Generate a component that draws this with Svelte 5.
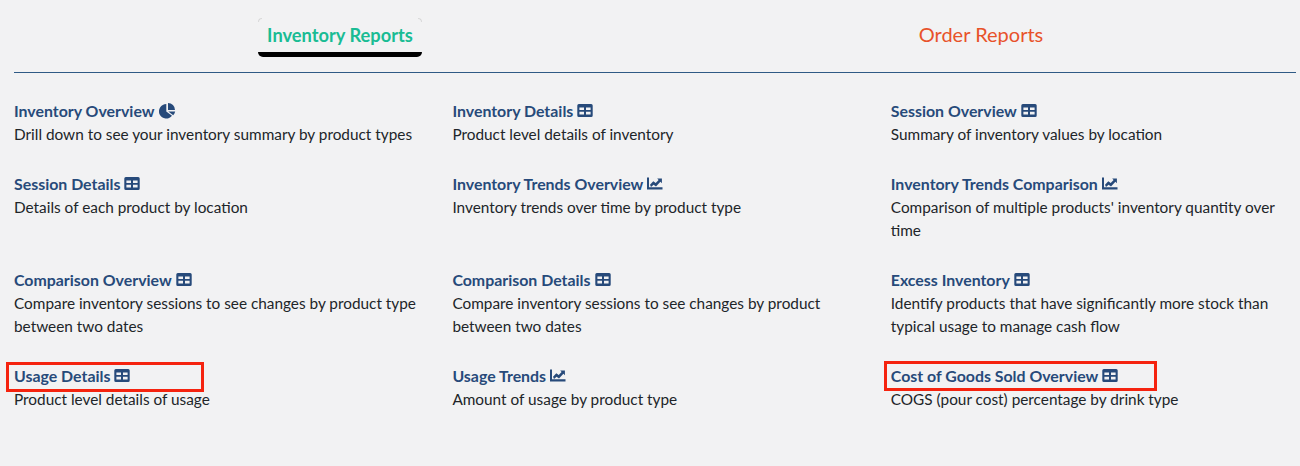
<script>
	const reports = [
		{ title: 'Inventory Overview', icon: 'pie', text: 'Drill down to see your inventory summary by product types' },
		{ title: 'Inventory Details', icon: 'table', text: 'Product level details of inventory' },
		{ title: 'Session Overview', icon: 'table', text: 'Summary of inventory values by location' },
		{ title: 'Session Details', icon: 'table', text: 'Details of each product by location' },
		{ title: 'Inventory Trends Overview', icon: 'line', text: 'Inventory trends over time by product type' },
		{ title: 'Inventory Trends Comparison', icon: 'line', text: "Comparison of multiple products' inventory quantity over time" },
		{ title: 'Comparison Overview', icon: 'table', text: 'Compare inventory sessions to see changes by product type between two dates' },
		{ title: 'Comparison Details', icon: 'table', text: 'Compare inventory sessions to see changes by product between two dates' },
		{ title: 'Excess Inventory', icon: 'table', text: 'Identify products that have significantly more stock than typical usage to manage cash flow' },
		{ title: 'Usage Details', icon: 'table', text: 'Product level details of usage' },
		{ title: 'Usage Trends', icon: 'line', text: 'Amount of usage by product type' },
		{ title: 'Cost of Goods Sold Overview', icon: 'table', text: 'COGS (pour cost) percentage by drink type' }
	];
</script>

<div class="page">
	<div class="tabs">
		<div class="tab-cell"><button class="tab active">Inventory Reports</button></div>
		<div class="tab-cell"><button class="tab order">Order Reports</button></div>
	</div>

	<div class="grid">
		{#each reports as r}
			<div class="report">
				<div class="title">
					{r.title}
					{#if r.icon === 'table'}
						<svg class="icon" width="16" height="13" viewBox="0 0 16 13">
							<path fill-rule="evenodd" d="M1.800 0h12.400a1.500 1.500 0 0 1 1.500 1.500v10a1.500 1.500 0 0 1-1.500 1.500H1.800a1.500 1.500 0 0 1-1.500-1.500v-10A1.500 1.500 0 0 1 1.800 0zM2.400 3.400v2.700h4.600V3.400zM9 3.400v2.700h4.600V3.400zM2.400 7.700v2.900h4.600V7.700zM9 7.700v2.900h4.600V7.700z" />
						</svg>
					{:else if r.icon === 'pie'}
						<svg class="icon" width="17" height="16" viewBox="0 0 17 16">
							<path d="M7.300 1A7.300 7.300 0 1 0 13 12.800L7.300 8.500z" />
							<path d="M9 0V7h7A7 7 0 0 0 9 0z" />
							<path d="M9.300 8.600h6.900a7 7 0 0 1-2 3.600z" />
						</svg>
					{:else}
						<svg class="icon" width="16" height="13" viewBox="0 0 16 13">
							<path d="M2 0.500v9.800h13.500v2.200H0V0.500z" />
							<path d="M3 7.800l3.300-3.600 2.400 1.900 2.900-3.200-1.400-1.400h4.700v4.700l-1.500-1.500-4.400 4.900-2.400-1.900-2.600 2.400z" />
						</svg>
					{/if}
				</div>
				<div class="desc">{r.text}</div>
			</div>
		{/each}
	</div>

	<div class="mark mark-left"></div>
	<div class="mark mark-right"></div>
</div>

<style>
	:global(body) {
		margin: 0;
		background: #f2f2f3;
	}

	.page {
		position: relative;
		height: 466px;
		overflow: hidden;
		box-sizing: border-box;
		padding: 0 4px 0 14px;
		font-family: Lato, 'Open Sans', sans-serif;
		color: #212529;
	}

	.tabs {
		display: grid;
		grid-template-columns: 641px 641px;
		height: 72px;
		border-bottom: 1px solid #2f5a85;
		padding-left: 5.5px;
	}

	.tab-cell {
		display: flex;
		justify-content: center;
		align-items: flex-start;
		padding-top: 18px;
	}

	.tab {
		font: inherit;
		background: none;
		border: none;
		padding: 0;
		box-sizing: border-box;
	}

	.tab.active {
		position: relative;
		width: 164px;
		height: 39px;
		font-size: 18.3px;
		line-height: 34px;
		color: #1abc94;
		font-weight: 700;
		border-bottom: 5px solid #000;
		border-radius: 0 0 5px 5px;
	}

	.tab.active::before,
	.tab.active::after {
		content: '';
		position: absolute;
		top: 0;
		width: 3px;
		height: 3px;
		border-top: 1px solid #d8d8d8;
	}

	.tab.active::before {
		left: 0;
		border-left: 1px solid #d8d8d8;
		border-top-left-radius: 4px;
	}

	.tab.active::after {
		right: 0;
		border-right: 1px solid #d8d8d8;
		border-top-right-radius: 4px;
	}

	.tab.order {
		height: 31px;
		color: #e8522a;
		font-size: 20px;
	}

	.grid {
		display: grid;
		grid-template-columns: repeat(3, 438.4px);
		padding-top: 26px;
	}

	.report {
		padding-bottom: 26px;
		line-height: 23px;
	}

	.title {
		display: flex;
		align-items: center;
		gap: 4px;
		font-size: 15.9px;
		color: #274a7a;
		font-weight: 700;
	}

	.icon {
		fill: #274a7a;
		flex: none;
	}

	.desc {
		font-size: 15.35px;
		max-width: 408px;
		padding-top: 1px;
	}

	.mark {
		position: absolute;
		box-sizing: border-box;
		border: 3px solid #f5230f;
	}

	.mark-left {
		left: 6px;
		top: 362px;
		width: 198px;
		height: 30px;
	}

	.mark-right {
		left: 884px;
		top: 361px;
		width: 273px;
		height: 30px;
	}
</style>
